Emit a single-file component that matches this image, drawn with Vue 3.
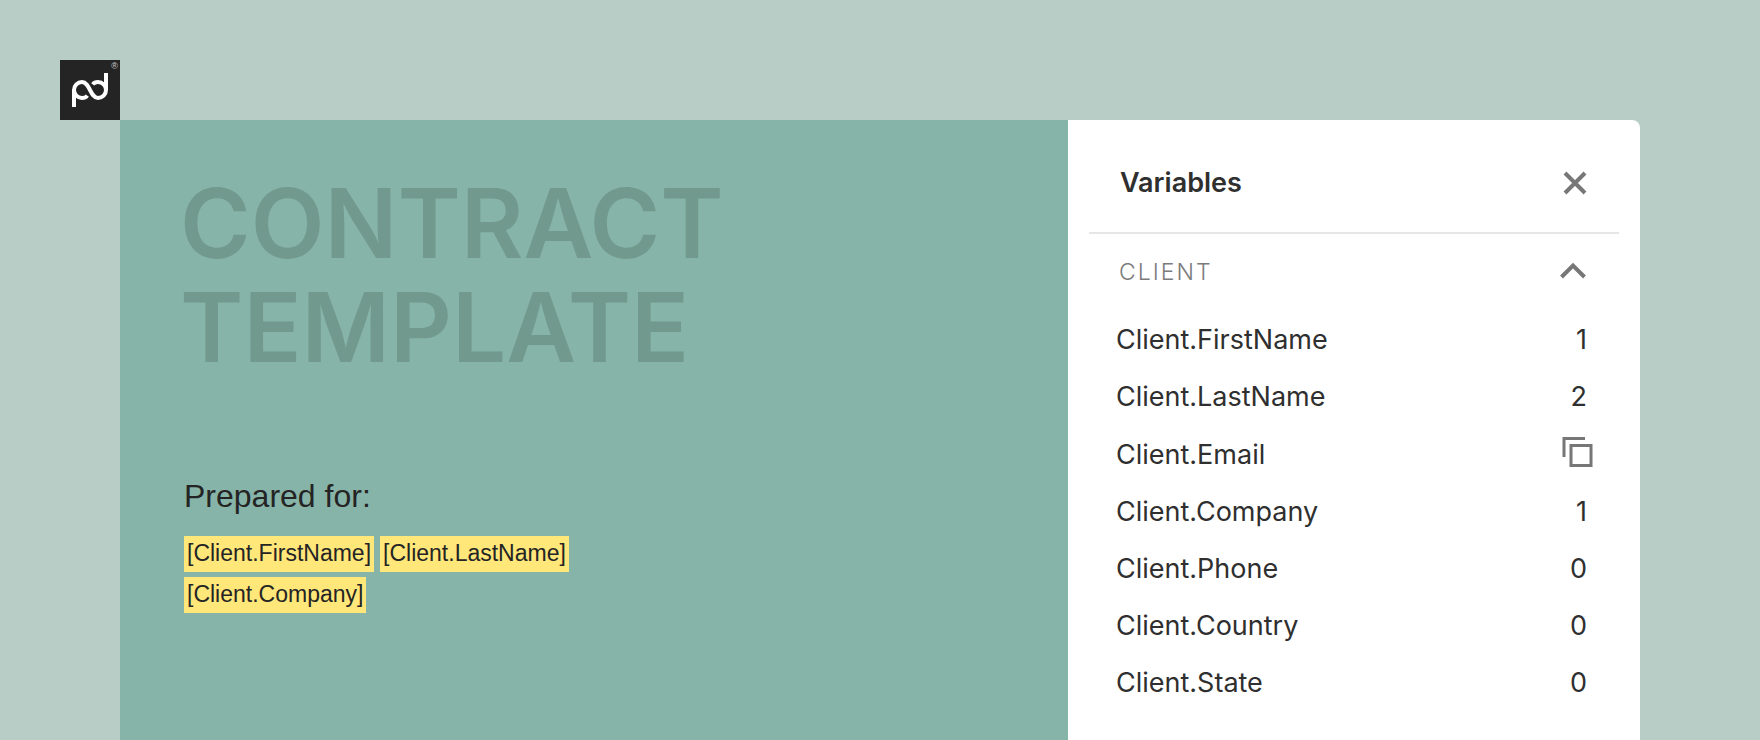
<script setup>
import { ref } from 'vue'

const tagLines = [['Client.FirstName', 'Client.LastName'], ['Client.Company']]

const variables = [
  { name: 'Client.FirstName', count: 1 },
  { name: 'Client.LastName', count: 2 },
  { name: 'Client.Email', copy: true },
  { name: 'Client.Company', count: 1 },
  { name: 'Client.Phone', count: 0 },
  { name: 'Client.Country', count: 0 },
  { name: 'Client.State', count: 0 },
]

const expanded = ref(true)
</script>

<template>
  <div class="page">
    <div class="logo">
      <svg viewBox="0 0 60 60" aria-hidden="true">
        <path d="M14 47V30A8 8 0 0 1 22 22C26 22 28 26 30 30S34 38 38 38A8 8 0 0 0 46 30V13" />
        <path d="M14 30A8 8 0 0 0 22 38Q25.500 38 27.300 35.600" />
        <path d="M46 30A8 8 0 0 0 38 22Q34.500 22 32.700 24.400" />
      </svg>
      <span class="mark">®</span>
    </div>

    <main class="card">
      <section class="document">
        <h1>CONTRACT<br />TEMPLATE</h1>
        <p class="prepared">Prepared for:</p>
        <div class="tags">
          <div v-for="(line, i) in tagLines" :key="i" class="tag-line">
            <span v-for="tag in line" :key="tag" class="tag">[{{ tag }}]</span>
          </div>
        </div>
      </section>

      <aside class="panel">
        <header class="panel-head">
          <h2>Variables</h2>
          <button type="button" class="icon-button" aria-label="Close">
            <svg width="24" height="24" viewBox="0 0 24 24"><path d="M2 2l20 20M22 2l-20 20" /></svg>
          </button>
        </header>
        <button type="button" class="group" :aria-expanded="expanded" @click="expanded = !expanded">
          <span>CLIENT</span>
          <svg width="26" height="20" viewBox="0 0 26 20"><path d="M1.500 15L13 3.500L24.500 15" /></svg>
        </button>
        <ul v-if="expanded" class="list">
          <li v-for="item in variables" :key="item.name" :class="{ active: item.copy }">
            <span>{{ item.name }}</span>
            <button v-if="item.copy" type="button" class="icon-button copy" aria-label="Copy Client.Email">
              <svg width="32" height="32" viewBox="0 0 32 32">
                <path d="M3 21V2.500H24" />
                <rect x="10" y="9.500" width="20" height="20" />
              </svg>
            </button>
            <span v-else class="count">{{ item.count }}</span>
          </li>
        </ul>
      </aside>
    </main>
  </div>
</template>

<style>
body {
  margin: 0;
  background: #b8cdc6;
}
</style>

<style scoped>
.page {
  box-sizing: border-box;
  min-height: 100vh;
  padding: 60px 120px 0 60px;
  display: flex;
  flex-direction: column;
  background: #b8cdc6;
  color: #2f2f2f;
  font-family: Inter, "Liberation Sans", sans-serif;
}
.logo {
  position: relative;
  width: 60px;
  height: 60px;
  background: #242424;
}
.logo svg {
  display: block;
  fill: none;
  stroke: #fff;
  stroke-width: 4;
}
.mark {
  position: absolute;
  top: 1px;
  right: 2px;
  color: #d0d0d0;
  font: 9px/10px "Liberation Sans", sans-serif;
}
.card {
  flex: 1;
  margin-left: 60px;
  display: grid;
  grid-template-columns: 948fr 572fr;
  border-radius: 0 8px 0 0;
  overflow: hidden;
  background: #fff;
}
.document {
  padding: 51px 64px 40px;
  background: #87b4a8;
  color: #242424;
  font-family: "Liberation Sans", Arial, sans-serif;
}
h1 {
  margin: 0 0 97px -4px;
  color: #72998e;
  font: 600 96px/104px Inter, sans-serif;
}
.prepared {
  margin: 0 0 20px;
  font-size: 32px;
  line-height: 40px;
}
.tags {
  display: flex;
  flex-direction: column;
  gap: 5px;
}
.tag-line {
  display: flex;
  flex-wrap: wrap;
  gap: 6px;
}
.tag {
  padding: 0 3px 2px;
  background: #ffe77a;
  font-size: 23px;
  line-height: 34px;
}
.panel {
  padding-bottom: 28px;
}
.panel-head {
  display: flex;
  align-items: center;
  justify-content: space-between;
  margin: 0 21px;
  padding: 47px 32px 33px 31px;
  border-bottom: 2px solid #e6e6e6;
}
h2 {
  margin: 0;
  font-size: 27px;
  font-weight: 600;
  line-height: 32px;
}
button {
  border: 0;
  background: none;
  cursor: pointer;
}
.icon-button {
  padding: 0;
}
button svg {
  display: block;
  fill: none;
  stroke: #777;
  stroke-width: 4;
}
.group {
  display: flex;
  align-items: center;
  justify-content: space-between;
  width: 100%;
  padding: 22px 54px 0 51px;
  color: #7b7b7b;
  font: 300 23px/32px Inter, sans-serif;
  letter-spacing: 2px;
}
.list {
  margin: 23px 0 0;
  padding: 0 47px 0 48px;
  list-style: none;
  font-size: 27px;
}
li {
  display: flex;
  align-items: center;
  justify-content: space-between;
  height: 57px;
}
li.active {
  height: 58px;
}
.count {
  padding-right: 6px;
}
.copy {
  padding-bottom: 4px;
}
.copy svg {
  stroke-width: 3;
}
</style>
